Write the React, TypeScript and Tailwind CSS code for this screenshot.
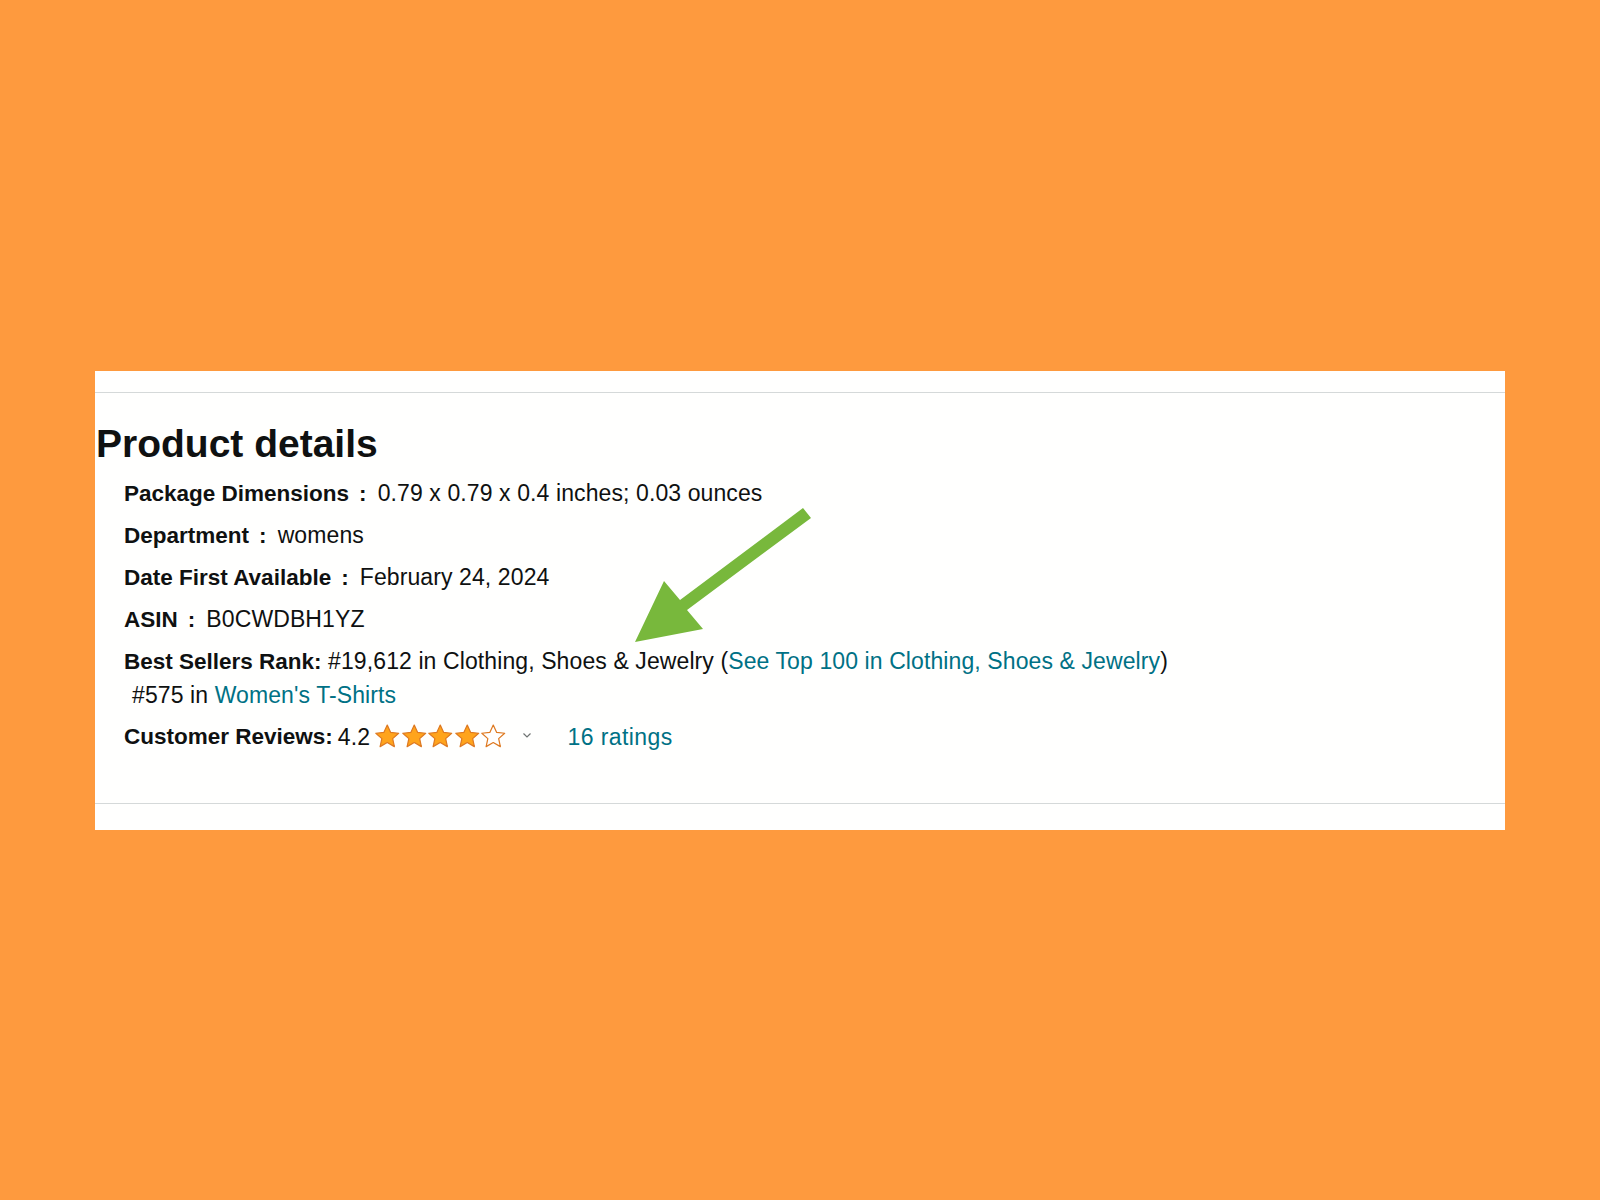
import React from 'react';

const Star = ({ filled }: { filled: boolean }) => (
  <svg width="26.5" height="27" viewBox="0 0 24 24" className="block">
    <path
      d="M12 1.6l3.1 6.7 7.25.75-5.45 4.9 1.55 7.2L12 17.5l-6.45 3.65 1.55-7.2L1.65 9.05l7.25-.75z"
      fill={filled ? '#FFA41C' : '#ffffff'}
      stroke="#DE7921"
      strokeWidth="1.1"
      strokeLinejoin="round"
    />
  </svg>
);

function Row({ label, value }: { label: string; value: string }) {
  return (
    <div className="h-[30px] leading-[30px] mb-[12px] whitespace-nowrap">
      <span className="font-bold text-[22.5px] tracking-normal">{label}</span>
      <span className="font-bold text-[22.5px] ml-[10px] mr-[11px]">:</span>
      <span>{value}</span>
    </div>
  );
}

export default function App() {
  return (
    <div className="w-full h-[1200px] bg-[#fe9a3e] flex items-center justify-center">
      <div className="relative w-[1410px] h-[459px] bg-[#fffffe] flex flex-col font-['Liberation_Sans',Arial,sans-serif] text-[#0f1111]">
        <div className="h-[21px]" />
        <div className="border-t border-[#d5d9d9]" />

        <h2 className="mt-[29px] mb-[12px] text-[39px] leading-[44px] font-bold pl-[1px]">
          Product details
        </h2>

        <div className="pl-[29px] text-[23px] tracking-[0.1px]">
          <Row label="Package Dimensions" value="0.79 x 0.79 x 0.4 inches; 0.03 ounces" />
          <Row label="Department" value="womens" />
          <Row label="Date First Available" value="February 24, 2024" />
          <Row label="ASIN" value="B0CWDBH1YZ" />

          <div className="mb-[12px] whitespace-nowrap">
            <div className="h-[30px] leading-[30px]">
              <span className="font-bold text-[22.5px] tracking-normal">Best Sellers Rank:</span> #19,612 in Clothing, Shoes &amp; Jewelry (
              <a className="text-[#007185]">See Top 100 in Clothing, Shoes &amp; Jewelry</a>)
            </div>
            <div className="h-[30px] leading-[30px] mt-[4px] pl-[8px]">
              #575 in <a className="text-[#007185]">Women's T-Shirts</a>
            </div>
          </div>

          <div className="h-[30px] leading-[30px] flex items-center whitespace-nowrap">
            <span className="font-bold text-[22.5px] tracking-normal">Customer Reviews:</span>
            <span className="ml-[5px]">4.2</span>
            <div className="flex items-center ml-[4px]">
              <Star filled />
              <Star filled />
              <Star filled />
              <Star filled />
              <Star filled={false} />
            </div>
            <svg width="10" height="8" viewBox="0 0 10 8" className="ml-[15px] -mt-[4px]">
              <path d="M1.5 2.5l3.5 3.5 3.5-3.5" fill="none" stroke="#6f7373" strokeWidth="1.2" />
            </svg>
            <a className="ml-[36px] text-[#007185] tracking-[0.4px]">16 ratings</a>
          </div>
        </div>

        <div className="flex-1" />
        <div className="border-t border-[#d5d9d9]" />
        <div className="h-[26px]" />

        <svg
          className="absolute left-[535px] top-[130px] pointer-events-none"
          width="185"
          height="145"
          viewBox="630 500 185 145"
        >
          <polygon
            points="803,507 811,517 687,609 703,628 635,641 664,580 680,599"
            fill="#78b83c"
          />
        </svg>
      </div>
    </div>
  );
}
